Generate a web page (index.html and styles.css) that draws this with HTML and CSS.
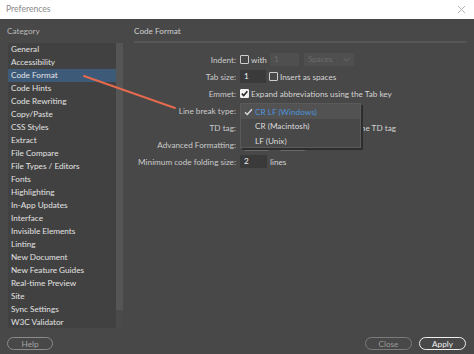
FILE: index.html
```html
<!DOCTYPE html>
<html>
<head>
<meta charset="utf-8">
<link rel="stylesheet" href="styles.css">
</head>
<body>
<div class="window">
  <header class="titlebar">
    <span class="title">Preferences</span>
    <svg class="close-x" width="9" height="9" viewBox="0 0 9 9"><path d="M1 1 L8 8 M8 1 L1 8" stroke="#b4b4b4" stroke-width="1" fill="none"/></svg>
  </header>
  <div class="body">
    <aside class="sidebar">
      <div class="cat-label">Category</div>
      <div class="listbox">
        <ul class="list">
          <li>General</li>
          <li>Accessibility</li>
          <li class="selected">Code Format</li>
          <li>Code Hints</li>
          <li>Code Rewriting</li>
          <li>Copy/Paste</li>
          <li>CSS Styles</li>
          <li>Extract</li>
          <li>File Compare</li>
          <li>File Types / Editors</li>
          <li>Fonts</li>
          <li>Highlighting</li>
          <li>In-App Updates</li>
          <li>Interface</li>
          <li>Invisible Elements</li>
          <li>Linting</li>
          <li>New Document</li>
          <li>New Feature Guides</li>
          <li>Real-time Preview</li>
          <li>Site</li>
          <li>Sync Settings</li>
          <li>W3C Validator</li>
        </ul>
        <div class="scrollbar"><div class="thumb"></div></div>
      </div>
    </aside>
    <main class="panel">
      <div class="panel-title">Code Format</div>
      <div class="form">
        <div class="label">Indent:</div>
        <div class="ctrl">
          <span class="cb"></span><span class="txt">with</span>
          <span class="input disabled w-indent">1</span>
          <span class="select disabled">Spaces<svg class="chev" width="7" height="5" viewBox="0 0 7 5"><path d="M0.5 1 L3.5 4 L6.5 1" stroke="#6c6c6c" fill="none"/></svg></span>
        </div>

        <div class="label">Tab size:</div>
        <div class="ctrl">
          <span class="input w-tab">1</span>
          <span class="cb"></span><span class="txt">Insert as spaces</span>
        </div>

        <div class="label">Emmet:</div>
        <div class="ctrl">
          <span class="cb checked"><svg width="9" height="9" viewBox="0 0 9 9"><path d="M1.8 4.6 L3.7 6.6 L7.4 2.2" stroke="#2a2a2a" stroke-width="1.6" fill="none"/></svg></span><span class="txt">Expand abbreviations using the Tab key</span>
        </div>

        <div class="label">Line break type:</div>
        <div class="ctrl has-menu">
          <span class="select closed"></span>
          <div class="menu">
            <div class="menu-item active">
              <svg class="tick" width="9" height="8" viewBox="0 0 9 8"><path d="M1 4.2 L3.3 6.5 L8 1.2" stroke="#e0e0e0" stroke-width="1.3" fill="none"/></svg>
              <span class="mtext">CR LF (Windows)</span>
            </div>
            <div class="menu-item"><span class="mtext">CR (Macintosh)</span></div>
            <div class="menu-item"><span class="mtext">LF (Unix)</span></div>
          </div>
        </div>

        <div class="label">TD tag:</div>
        <div class="ctrl">
          <span class="cb"></span>
          <span class="clip"><span class="clip-inner">Do not include a break inside the TD tag</span></span>
        </div>

        <div class="label">Advanced Formatting:</div>
        <div class="ctrl">
          <span class="btn small"></span><span class="btn small"></span>
        </div>

        <div class="label">Minimum code folding size:</div>
        <div class="ctrl">
          <span class="input w-fold">2</span>
          <span class="txt lines">lines</span>
        </div>
      </div>
    </main>
  </div>
  <footer class="footer">
    <span class="btn help">Help</span>
    <div class="right-btns">
      <span class="btn close">Close</span>
      <span class="btn apply">Apply</span>
    </div>
  </footer>
  <svg class="arrow" width="474" height="354" viewBox="0 0 474 354"><line x1="84" y1="76" x2="175" y2="108" stroke="#e46a4e" stroke-width="2" stroke-linecap="round"/></svg>
</div>
</body>
</html>
```

FILE: styles.css
```css
* { box-sizing: border-box; }
html, body { margin: 0; padding: 0; background: #484848; }
body { font-family: Lato, "Open Sans", sans-serif; font-size: 8.2px; color: #d6d6d6; }

.window { position: relative; width: 474px; height: 354px; overflow: hidden; background: #484848; }

.titlebar {
  height: 19px; background: #ffffff; display: flex; align-items: center;
  justify-content: space-between; padding: 0 8px 1px 6px;
}
.title { color: #8a8a8a; font-size: 8.6px; }

.body { height: 311px; display: flex; background: #484848; }

.sidebar { width: 123px; padding-left: 8px; display: flex; flex-direction: column; }
.cat-label { height: 24px; line-height: 24px; color: #b8b8b8; margin-left: -1px; }
.listbox { display: flex; height: 285px; }
.list { list-style: none; margin: 0; padding: 0; width: 108px; background: #414141; overflow: hidden; }
.list li { height: 13px; line-height: 13px; padding-left: 3px; color: #e2e2e2; white-space: nowrap; }
.list li.selected { background: #3d5a79; }
.scrollbar { width: 7px; background: #4a4a4a; }
.thumb { height: 267px; background: #555555; }

.panel { flex: 1; margin-left: 11px; margin-right: 7px; }
.panel-title { height: 24px; line-height: 24px; color: #cfcfcf; border-bottom: 2px solid #565656; }

.form {
  margin-top: 8px; display: grid; grid-template-columns: 102px 1fr;
  grid-auto-rows: 17px; column-gap: 4px; align-items: center;
}
.label { text-align: right; color: #cacaca; white-space: nowrap; }
.ctrl { display: flex; align-items: center; position: relative; white-space: nowrap; }

.cb { width: 9px; height: 9px; border: 1px solid #cdcdcd; border-radius: 1px; flex: none; display: inline-flex; }
.cb.checked { background: #f2f2f2; border-color: #f2f2f2; }
.cb.checked svg { margin: -1px; }
.txt { margin-left: 2px; color: #d4d4d4; }

.clip { margin-left: 113px; width: 34px; overflow: hidden; display: flex; justify-content: flex-end; color: #d4d4d4; }
.clip-inner { flex: none; }

.input { height: 13px; line-height: 13px; background: #3a3a3a; color: #f0f0f0; padding-left: 4px; flex: none; }
.input.disabled { background: #4f4f4f; color: #6c6c6c; }
.w-indent { width: 29px; margin-left: 3px; }
.w-tab { width: 26px; margin-right: 3px; }
.w-fold { width: 27px; }
.lines { margin-left: 3px; }

.select { height: 13px; line-height: 13px; padding-left: 4px; display: inline-flex; align-items: center; justify-content: space-between; }
.select.disabled { width: 50px; margin-left: 5px; background: #4f4f4f; color: #6c6c6c; padding-right: 4px; }
.select.closed { width: 80px; background: #3e3e3e; }

.menu {
  position: absolute; left: 0; top: -1px; width: 121px; height: 45px;
  background: #484848; border: 1px solid #5a5a5a;
  box-shadow: 2px 2px 0 #2d2d2d; z-index: 2;
}
.menu-item { height: 14.5px; display: flex; align-items: center; position: relative; }
.menu-item.active { height: 15px; background: #525252; }
.tick { position: absolute; left: 3px; top: 4px; }
.mtext { margin-left: 14px; color: #dcdcdc; }
.menu-item.active .mtext { color: #4f93dc; }

.btn {
  display: inline-flex; align-items: center; justify-content: center;
  height: 13px; border-radius: 7px; border: 1px solid #8a8a8a; color: #a8a8a8;
}
.btn.small { width: 33px; margin-right: 3px; height: 12px; border-color: #6a6a6a; }

.footer { height: 24px; display: flex; justify-content: space-between; align-items: flex-start; padding: 7px 8px 0 7px; }
.help { width: 46px; border-color: #8c8c8c; color: #a6a6a6; }
.right-btns { display: flex; gap: 7px; }
.close { width: 47px; border-color: #7c7c7c; color: #9a9a9a; }
.apply { width: 47px; border: 1.5px solid #eeeeee; color: #f0f0f0; }

.arrow { position: absolute; left: 0; top: 0; pointer-events: none; z-index: 5; }
```
